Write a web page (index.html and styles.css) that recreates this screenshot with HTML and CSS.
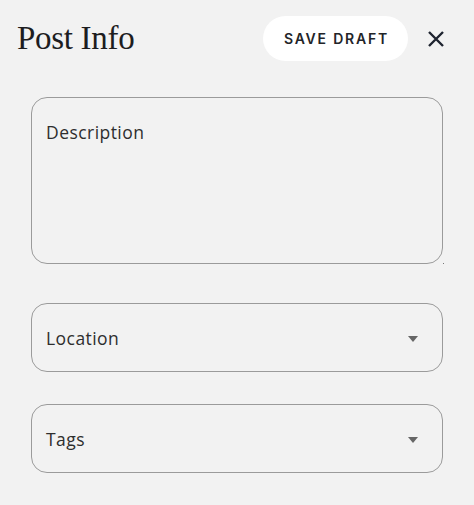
FILE: index.html
```html
<!DOCTYPE html>
<html lang="en">
<head>
<meta charset="utf-8">
<title>Post Info</title>
<link rel="stylesheet" href="styles.css">
</head>
<body>
<div class="panel">
  <header class="header">
    <h1 class="title">Post Info</h1>
    <div class="actions">
      <button class="draft-btn" type="button">SAVE DRAFT</button>
      <button class="close-btn" type="button" aria-label="Close">
        <svg width="18" height="18" viewBox="0 0 18 18"><path d="M2 2 L16 16 M16 2 L2 16" stroke="#1f2430" stroke-width="2.4" fill="none"/></svg>
      </button>
    </div>
  </header>
  <form class="form">
    <div class="field field-area">
      <span class="label">Description</span>
      <span class="grip"></span>
    </div>
    <div class="field field-select">
      <span class="label">Location</span>
      <span class="caret"></span>
    </div>
    <div class="field field-select">
      <span class="label">Tags</span>
      <span class="caret"></span>
    </div>
  </form>
</div>
</body>
</html>
```
FILE: styles.css
```css
html, body {
  margin: 0;
  padding: 0;
  background: #f2f2f2;
}
.panel {
  width: 474px;
  height: 505px;
  box-sizing: border-box;
  background: #f2f2f2;
  font-family: "Open Sans", "Noto Sans", sans-serif;
}
.header {
  display: flex;
  align-items: center;
  justify-content: space-between;
  padding: 16px 30px 0 17px;
  height: 45px;
}
.title {
  margin: 0;
  font-family: "Liberation Serif", "DejaVu Serif", serif;
  font-weight: 400;
  font-size: 33px;
  line-height: 45px;
  color: #1d1d1f;
  letter-spacing: -0.3px;
}
.actions {
  display: flex;
  align-items: center;
  gap: 20px;
}
.draft-btn {
  height: 45px;
  width: 145px;
  border: none;
  border-radius: 23px;
  background: #ffffff;
  font-family: "Inter", "Open Sans", sans-serif;
  font-weight: 600;
  font-size: 14px;
  letter-spacing: 1.8px;
  color: #222428;
  padding: 0 0 0 2px;
  cursor: pointer;
}
.close-btn {
  width: 16px;
  height: 16px;
  padding: 0;
  border: none;
  background: none;
  display: flex;
  align-items: center;
  justify-content: center;
}
.close-btn svg {
  width: 18px;
  height: 18px;
  flex: none;
}
.form {
  display: flex;
  flex-direction: column;
  padding: 36px 31px 0 31px;
}
.field {
  position: relative;
  box-sizing: border-box;
  border: 1.5px solid #9b9b9b;
  border-radius: 16px;
  display: flex;
  padding: 0 24px 0 14px;
}
.label {
  font-size: 17.5px;
  color: #2e2e2e;
  letter-spacing: 0.45px;
}
.field-area {
  height: 167px;
  align-items: flex-start;
  padding-top: 22px;
  margin-bottom: 39px;
}
.grip {
  position: absolute;
  right: -2px;
  bottom: -1px;
  width: 1.5px;
  height: 1.5px;
  background: #777;
}
.field-select {
  height: 69px;
  align-items: center;
  justify-content: space-between;
  margin-bottom: 32px;
}
.caret {
  width: 0;
  height: 0;
  border-left: 5.5px solid transparent;
  border-right: 5.5px solid transparent;
  border-top: 6px solid #666;
  margin-top: 3px;
}
```
